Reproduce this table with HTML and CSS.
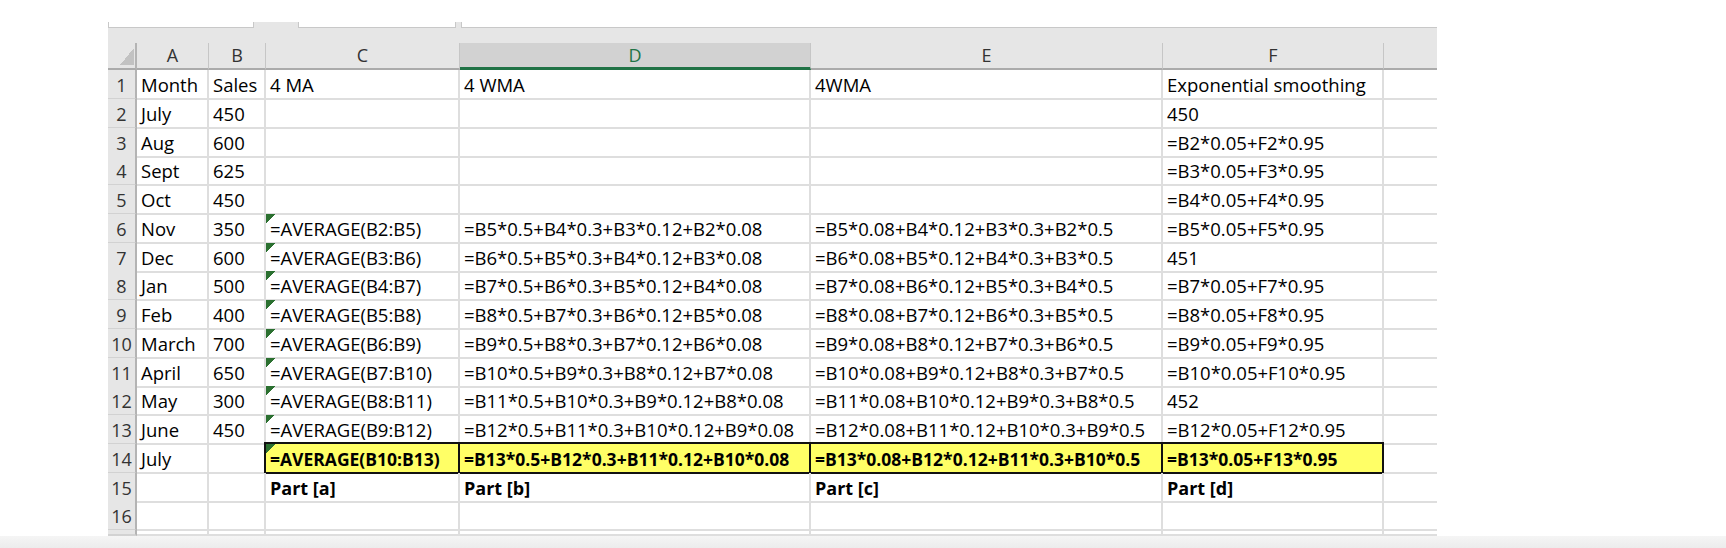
FILE: index.html
```html
<!DOCTYPE html>
<html>
<head>
<meta charset="utf-8">
<link rel="stylesheet" href="styles.css">
</head>
<body>
<div class="page">
  <div class="topbar">
    <div class="fbox fb1"></div>
    <div class="fbox fb2"></div>
    <div class="fbox fb3"></div>
  </div>
  <div class="sheet">
    <div class="row hdr">
      <div class="h corner"><div class="tri"></div></div>
      <div class="h">A</div><div class="h">B</div><div class="h">C</div><div class="h sel">D</div><div class="h">E</div><div class="h">F</div><div class="h last"></div>
    </div>
    <div class="row">
      <div class="rh">1</div><div class="c">Month</div><div class="c">Sales</div><div class="c">4 MA</div><div class="c">4 WMA</div><div class="c">4WMA</div><div class="c">Exponential smoothing</div><div class="c last"></div>
    </div>
    <div class="row">
      <div class="rh">2</div><div class="c">July</div><div class="c">450</div><div class="c"></div><div class="c"></div><div class="c"></div><div class="c">450</div><div class="c last"></div>
    </div>
    <div class="row">
      <div class="rh">3</div><div class="c">Aug</div><div class="c">600</div><div class="c"></div><div class="c"></div><div class="c"></div><div class="c">=B2*0.05+F2*0.95</div><div class="c last"></div>
    </div>
    <div class="row">
      <div class="rh">4</div><div class="c">Sept</div><div class="c">625</div><div class="c"></div><div class="c"></div><div class="c"></div><div class="c">=B3*0.05+F3*0.95</div><div class="c last"></div>
    </div>
    <div class="row">
      <div class="rh">5</div><div class="c">Oct</div><div class="c">450</div><div class="c"></div><div class="c"></div><div class="c"></div><div class="c">=B4*0.05+F4*0.95</div><div class="c last"></div>
    </div>
    <div class="row">
      <div class="rh">6</div><div class="c">Nov</div><div class="c">350</div><div class="c err">=AVERAGE(B2:B5)</div><div class="c">=B5*0.5+B4*0.3+B3*0.12+B2*0.08</div><div class="c">=B5*0.08+B4*0.12+B3*0.3+B2*0.5</div><div class="c">=B5*0.05+F5*0.95</div><div class="c last"></div>
    </div>
    <div class="row">
      <div class="rh">7</div><div class="c">Dec</div><div class="c">600</div><div class="c err">=AVERAGE(B3:B6)</div><div class="c">=B6*0.5+B5*0.3+B4*0.12+B3*0.08</div><div class="c">=B6*0.08+B5*0.12+B4*0.3+B3*0.5</div><div class="c">451</div><div class="c last"></div>
    </div>
    <div class="row">
      <div class="rh">8</div><div class="c">Jan</div><div class="c">500</div><div class="c err">=AVERAGE(B4:B7)</div><div class="c">=B7*0.5+B6*0.3+B5*0.12+B4*0.08</div><div class="c">=B7*0.08+B6*0.12+B5*0.3+B4*0.5</div><div class="c">=B7*0.05+F7*0.95</div><div class="c last"></div>
    </div>
    <div class="row">
      <div class="rh">9</div><div class="c">Feb</div><div class="c">400</div><div class="c err">=AVERAGE(B5:B8)</div><div class="c">=B8*0.5+B7*0.3+B6*0.12+B5*0.08</div><div class="c">=B8*0.08+B7*0.12+B6*0.3+B5*0.5</div><div class="c">=B8*0.05+F8*0.95</div><div class="c last"></div>
    </div>
    <div class="row">
      <div class="rh">10</div><div class="c">March</div><div class="c">700</div><div class="c err">=AVERAGE(B6:B9)</div><div class="c">=B9*0.5+B8*0.3+B7*0.12+B6*0.08</div><div class="c">=B9*0.08+B8*0.12+B7*0.3+B6*0.5</div><div class="c">=B9*0.05+F9*0.95</div><div class="c last"></div>
    </div>
    <div class="row">
      <div class="rh">11</div><div class="c">April</div><div class="c">650</div><div class="c err">=AVERAGE(B7:B10)</div><div class="c">=B10*0.5+B9*0.3+B8*0.12+B7*0.08</div><div class="c">=B10*0.08+B9*0.12+B8*0.3+B7*0.5</div><div class="c">=B10*0.05+F10*0.95</div><div class="c last"></div>
    </div>
    <div class="row">
      <div class="rh">12</div><div class="c">May</div><div class="c">300</div><div class="c err">=AVERAGE(B8:B11)</div><div class="c">=B11*0.5+B10*0.3+B9*0.12+B8*0.08</div><div class="c">=B11*0.08+B10*0.12+B9*0.3+B8*0.5</div><div class="c">452</div><div class="c last"></div>
    </div>
    <div class="row">
      <div class="rh">13</div><div class="c">June</div><div class="c">450</div><div class="c err">=AVERAGE(B9:B12)</div><div class="c">=B12*0.5+B11*0.3+B10*0.12+B9*0.08</div><div class="c">=B12*0.08+B11*0.12+B10*0.3+B9*0.5</div><div class="c">=B12*0.05+F12*0.95</div><div class="c last"></div>
    </div>
    <div class="row">
      <div class="rh">14</div><div class="c">July</div><div class="c"></div><div class="c y first err">=AVERAGE(B10:B13)</div><div class="c y">=B13*0.5+B12*0.3+B11*0.12+B10*0.08</div><div class="c y">=B13*0.08+B12*0.12+B11*0.3+B10*0.5</div><div class="c y">=B13*0.05+F13*0.95</div><div class="c last"></div>
    </div>
    <div class="row">
      <div class="rh">15</div><div class="c"></div><div class="c"></div><div class="c b">Part [a]</div><div class="c b">Part [b]</div><div class="c b">Part [c]</div><div class="c b">Part [d]</div><div class="c last"></div>
    </div>
    <div class="row">
      <div class="rh">16</div><div class="c"></div><div class="c"></div><div class="c"></div><div class="c"></div><div class="c"></div><div class="c"></div><div class="c last"></div>
    </div>
    <div class="row part">
      <div class="rh"></div><div class="c"></div><div class="c"></div><div class="c"></div><div class="c"></div><div class="c"></div><div class="c"></div><div class="c last"></div>
    </div>
  </div>
</div>
<div class="band"></div>
</body>
</html>
```
FILE: styles.css
```css
* { box-sizing: border-box; margin: 0; padding: 0; }
html, body { background: #fff; width: 1726px; height: 548px; overflow: hidden; }
body { font-family: "Open Sans", "Liberation Sans", sans-serif; color: #000; }

.page { padding: 22px 0 0 108px; height: 536px; }

.topbar { width: 1329px; height: 21px; background: #e6e6e6; display: flex; align-items: flex-start; }
.fbox { height: 6px; background: #fff; border: 1px solid #c8c8c8; border-top: none; }
.fb1 { width: 146px; }
.fb2 { width: 158px; margin-left: 44px; }
.fb3 { flex: 1; margin-left: 5px; border-right: none; }

.sheet { width: 1329px; }
.row {
  display: grid;
  grid-template-columns: 29px 72px 57px 194px 351px 352px 221px 53px;
  height: 28.75px;
}
.row.hdr { height: 27px; }
.row.part { height: 6px; overflow: hidden; }

.h {
  background: #e6e6e6;
  border-right: 1px solid #c6c6c6;
  border-bottom: 2px solid #ababab;
  text-align: center;
  color: #333;
  font-size: 18px;
  line-height: 25px;
}
.h.sel { background: #d2d2d2; border-bottom: 3px solid #217346; color: #217346; line-height: 24px; }
.h.last { border-right: none; }
.h.corner {
  border-right: 2px solid #b4b4b4;
  display: flex;
  justify-content: flex-end;
  align-items: flex-end;
  padding: 0 1px 3px 0;
}
.tri { width: 14px; height: 17px; background: linear-gradient(to bottom right, transparent 50%, #c2c2c2 50%); }

.rh {
  background: #e6e6e6;
  border-right: 2px solid #b4b4b4;
  border-bottom: 2px solid #d2d2d2;
  text-align: center;
  color: #333;
  font-size: 18px;
  line-height: 26px;
  padding-top: 2px;
}

.c {
  border-right: 2px solid #dedede;
  border-bottom: 2px solid #dedede;
  padding: 2px 0 0 4px;
  font-size: 18.5px;
  line-height: 26px;
  white-space: nowrap;
  overflow: hidden;
}
.c.last { border-right: none; }
.c.b { font-weight: 700; font-size: 18px; }

.err {
  background-image: linear-gradient(135deg, #2b7030 50%, transparent 50%);
  background-size: 9px 9px;
  background-repeat: no-repeat;
  background-position: 0 0;
}

.c.y {
  background-color: #ffff66;
  border: 2px solid #111;
  border-left: none;
  margin-top: -2px;
  font-weight: 700;
  font-size: 17.5px;
}
.c.y.first { border-left: 2px solid #111; margin-left: -2px; }

.band { height: 12px; width: 1726px; background: linear-gradient(#f5f5f5, #ececec); }
```
